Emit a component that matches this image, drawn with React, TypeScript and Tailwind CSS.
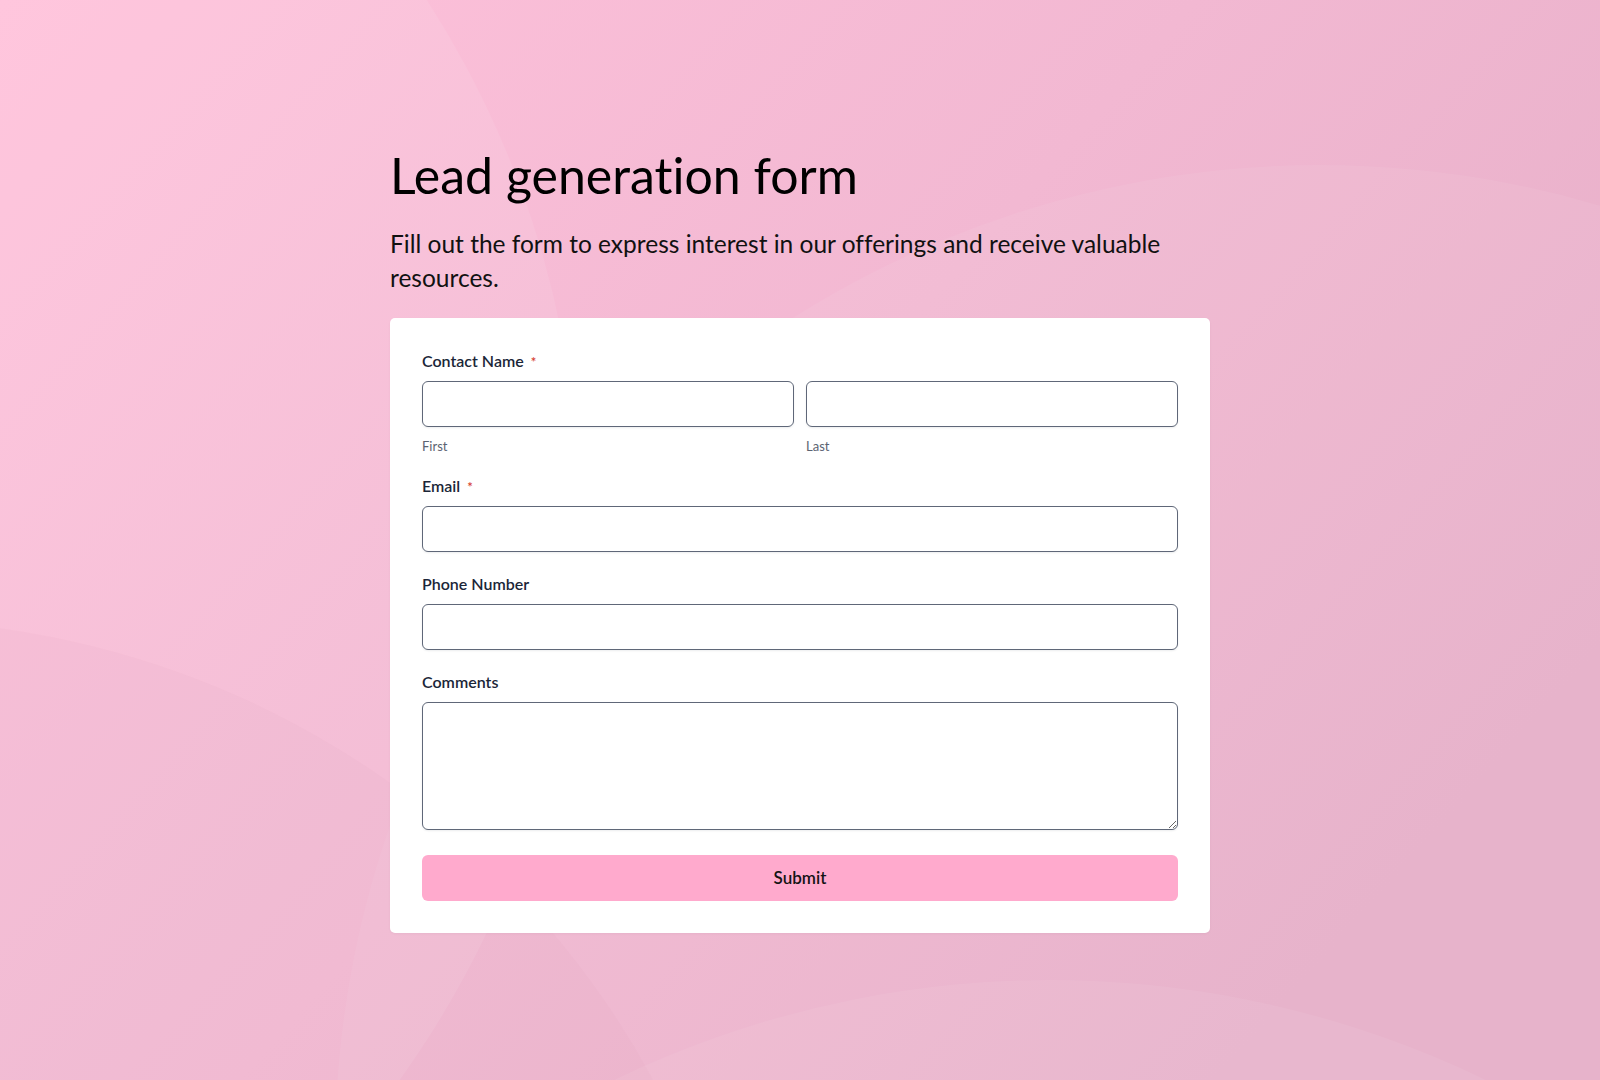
import React from "react";

type FieldProps = {
  label: string;
  required?: boolean;
  children: React.ReactNode;
};

const Field = ({ label, required, children }: FieldProps) => {
  return (
    <div className="flex flex-col">
      <label className="h-6 mb-2 flex items-center text-[16px] font-semibold text-[#1b2638]">
        {label}
        {required && <span className="ml-[7px] mt-[3px] text-[13px] text-[#d6402f]">*</span>}
      </label>
      {children}
    </div>
  );
};

const inputCls =
  "w-full h-[46px] rounded-md border border-[#5f6778] bg-white px-3 text-[15px] shadow-[0_1px_2px_rgba(15,23,42,0.08)] outline-none";

const Background = () => (
  <svg
    className="absolute inset-0 w-full h-full"
    viewBox="0 0 1600 1080"
    preserveAspectRatio="none"
  >
    <defs>
      <linearGradient id="bg" x1="0" y1="0" x2="1" y2="0.6">
        <stop offset="0" stopColor="#ffc2db" />
        <stop offset="0.55" stopColor="#f2b8d2" />
        <stop offset="1" stopColor="#e6afc8" />
      </linearGradient>
    </defs>
    <rect width="1600" height="1080" fill="url(#bg)" />
    <circle cx="1320" cy="1150" r="985" fill="#ffffff" opacity="0.06" />
    <circle cx="-380" cy="520" r="960" fill="#ffffff" opacity="0.08" />
    <circle cx="-120" cy="1500" r="880" fill="#d897b3" opacity="0.08" />
    <circle cx="1050" cy="1980" r="1000" fill="#ffffff" opacity="0.06" />
  </svg>
);

export default function App() {
  return (
    <div
      className="relative min-h-screen w-full overflow-hidden [font-variant-ligatures:none]"
      style={{ fontFamily: "Lato, 'Noto Sans', sans-serif" }}
    >
      <Background />
      <div className="relative mx-auto w-[820px] pt-[145px] pb-[146px]">
        <h1 className="text-[50px] leading-[60px] text-black mb-[22px]">
          Lead generation form
        </h1>
        <p className="text-[24.5px] leading-[34px] text-[#111] mb-[23px]">
          Fill out the form to express interest in our offerings and receive valuable resources.
        </p>
        <form className="bg-white rounded-[5px] px-8 pt-[31px] pb-[32px] shadow-[0_1px_3px_rgba(0,0,0,0.04)]">
          <Field label="Contact Name" required>
            <div className="grid grid-cols-2 gap-3">
              <div className="flex flex-col">
                <input className={inputCls} />
                <span className="mt-[11px] text-[13px] leading-4 text-[#5b6372]">First</span>
              </div>
              <div className="flex flex-col">
                <input className={inputCls} />
                <span className="mt-[11px] text-[13px] leading-4 text-[#5b6372]">Last</span>
              </div>
            </div>
          </Field>
          <div className="mt-5">
            <Field label="Email" required>
              <input className={inputCls} />
            </Field>
          </div>
          <div className="mt-5">
            <Field label="Phone Number">
              <input className={inputCls} />
            </Field>
          </div>
          <div className="mt-5">
            <Field label="Comments">
              <textarea className="w-full h-[128px] block rounded-md border border-[#5f6778] bg-white px-3 py-2 text-[15px] shadow-[0_1px_2px_rgba(15,23,42,0.08)] outline-none" />
            </Field>
          </div>
          <button
            type="button"
            className="mt-[25px] w-full h-[46px] rounded-md bg-[#ffaacd] text-[17px] font-semibold text-[#141414]"
          >
            Submit
          </button>
        </form>
      </div>
    </div>
  );
}
